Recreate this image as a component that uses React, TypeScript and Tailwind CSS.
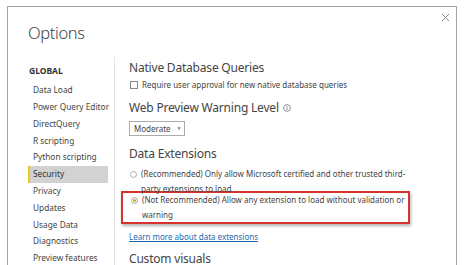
import React from 'react';

const navItems = [
  'Data Load',
  'Power Query Editor',
  'DirectQuery',
  'R scripting',
  'Python scripting',
  'Security',
  'Privacy',
  'Updates',
  'Usage Data',
  'Diagnostics',
  'Preview features',
];

const App: React.FC = () => {
  return (
    <div className="w-[474px] h-[265px] overflow-hidden bg-white font-['Noto_Sans',sans-serif] text-[#444] whitespace-nowrap">
      <div className="ml-[7px] mt-[6px] w-[450px] h-[320px] border border-[#a3a3a3] bg-white">
        {/* Title row */}
        <div className="flex justify-between items-start">
          <h1 className="pl-[20px] pt-[12px] text-[16.5px] leading-[28px] font-light tracking-[-0.4px] text-[#444]">Options</h1>
          <svg className="mt-[6px] mr-[6px]" width="9" height="9" viewBox="0 0 9 9">
            <path d="M1 1L8 8M8 1L1 8" stroke="#888" strokeWidth="1" />
          </svg>
        </div>

        <div className="flex mt-[10px]">
          {/* Sidebar */}
          <div className="w-[107px] border-r border-[#e3e3e3] pt-[6px] h-[260px]">
            <div className="pl-[21px] text-[8.5px] leading-[16px] font-bold text-[#333]">GLOBAL</div>
            <ul className="mt-[3px]">
              {navItems.map((item) => (
                <li
                  key={item}
                  className={
                    item === 'Security'
                      ? 'ml-[20px] w-[80px] h-[16.8px] pl-[3px] flex items-center text-[8.3px] text-[#333] bg-[#d2d2d2] border-l-2 border-[#f2c811]'
                      : 'ml-[20px] w-[80px] h-[16.8px] pl-[5px] flex items-center text-[8.3px] text-[#444]'
                  }
                >
                  {item}
                </li>
              ))}
            </ul>
          </div>

          {/* Content */}
          <div className="flex-1 pl-[14px] pt-[2px]">
            <h2 className="text-[12px] leading-[18px] tracking-[-0.2px] text-[#444]">Native Database Queries</h2>
            <label className="mt-[1px] flex items-center gap-[4px] text-[8px] leading-[14px] text-[#444]">
              <span className="ml-[1px] w-[8px] h-[8px] border border-[#8a8a8a] bg-white"></span>
              Require user approval for new native database queries
            </label>

            <h2 className="mt-[7px] flex items-center gap-[4px] text-[12px] leading-[18px] tracking-[-0.2px] text-[#444]">
              Web Preview Warning Level
              <svg width="8" height="8" viewBox="0 0 8 8">
                <circle cx="4" cy="4" r="3.4" fill="none" stroke="#777" strokeWidth="0.8" />
                <path d="M4 3.4V6" stroke="#777" strokeWidth="0.9" />
                <circle cx="4" cy="2.3" r="0.5" fill="#777" />
              </svg>
            </h2>
            <div className="mt-[4px] w-[56px] h-[15px] border border-[#ababab] flex items-center gap-[6px] pl-[4px] text-[8px] text-[#444]">
              Moderate
              <span className="text-[5px] text-[#777]">▼</span>
            </div>

            <h2 className="mt-[9px] text-[12px] leading-[18px] tracking-[-0.2px] text-[#444]">Data Extensions</h2>
            <div className="mt-[4px] flex gap-[4px] text-[8px] leading-[14.5px] text-[#444]">
              <span className="mt-[3.5px] ml-[1px] w-[7px] h-[7px] rounded-full border border-[#b0b0b0] shrink-0"></span>
              <span>
                (Recommended) Only allow Microsoft certified and other trusted third-
                <br />
                party extensions to load
              </span>
            </div>
            <div className="-ml-[8px] -mt-[5px] w-[289px] border-2 border-[#d6322e] shadow-[1px_2px_3px_rgba(0,0,0,0.3)] pl-[7px] flex gap-[4px] text-[8px] leading-[14.5px] text-[#444]">
              <span className="mt-[3.5px] ml-[1px] w-[7px] h-[7px] rounded-full border border-[#a8a8a8] shrink-0 flex items-center justify-center">
                <span className="w-[3px] h-[3px] rounded-full bg-[#d9a400]"></span>
              </span>
              <span>
                (Not Recommended) Allow any extension to load without validation or
                <br />
                warning
              </span>
            </div>
            <a href="#" className="mt-[6px] block w-fit text-[8px] leading-[14px] text-[#1b6ab3] underline">
              Learn more about data extensions
            </a>
            <h2 className="mt-[6px] text-[12px] leading-[18px] tracking-[-0.2px] text-[#444]">Custom visuals</h2>
          </div>
        </div>
      </div>
    </div>
  );
};

export default App;
